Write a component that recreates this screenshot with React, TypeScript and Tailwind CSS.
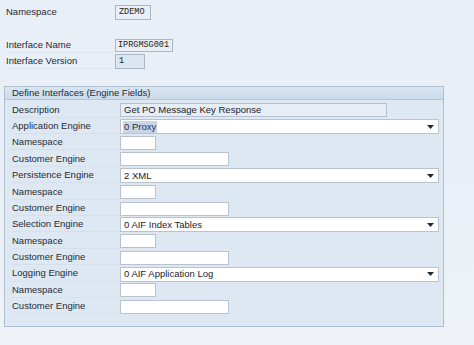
const font = { fontFamily: '"Liberation Sans", Arial, sans-serif' };
const mono = { fontFamily: '"Liberation Mono", "Courier New", monospace' };

type Row =
  | { label: string; kind: "display"; value: string }
  | { label: string; kind: "select"; value: string; selected?: boolean }
  | { label: string; kind: "short" }
  | { label: string; kind: "medium" };

const rows: Row[] = [
  { label: "Description", kind: "display", value: "Get PO Message Key Response" },
  { label: "Application Engine", kind: "select", value: "0 Proxy", selected: true },
  { label: "Namespace", kind: "short" },
  { label: "Customer Engine", kind: "medium" },
  { label: "Persistence Engine", kind: "select", value: "2 XML" },
  { label: "Namespace", kind: "short" },
  { label: "Customer Engine", kind: "medium" },
  { label: "Selection Engine", kind: "select", value: "0 AIF Index Tables" },
  { label: "Namespace", kind: "short" },
  { label: "Customer Engine", kind: "medium" },
  { label: "Logging Engine", kind: "select", value: "0 AIF Application Log" },
  { label: "Namespace", kind: "short" },
  { label: "Customer Engine", kind: "medium" },
];

function Arrow() {
  return (
    <svg width="7" height="4" viewBox="0 0 7 4" className="mr-[4px]">
      <path d="M0 0h7L3.5 4z" fill="#1f2a36" />
    </svg>
  );
}

function Field({ row }: { row: Row }) {
  if (row.kind === "display") {
    return (
      <div className="h-[14px] w-[267px] border border-[#b4c0cd] bg-[#e6edf4] pl-[3px] text-[9.5px] leading-[12px] text-[#1a242e]">
        {row.value}
      </div>
    );
  }
  if (row.kind === "select") {
    return (
      <div className="flex h-[15px] w-[319px] items-center justify-between border border-[#b8c3cf] bg-white pl-[2px] text-[9.5px] text-[#1a242e]">
        <span className={row.selected ? "bg-[#c9d5e6] px-[1px] leading-[12px] text-[#1b2e55]" : "px-[1px] leading-[12px]"}>
          {row.value}
        </span>
        <Arrow />
      </div>
    );
  }
  if (row.kind === "short") {
    return <div className="h-[14px] w-[36px] border border-[#b8c3cf] bg-white" />;
  }
  return <div className="h-[14px] w-[109px] border border-[#b8c3cf] bg-white" />;
}

export default function App() {
  return (
    <div
      className="flex h-[345px] w-[474px] flex-col bg-gradient-to-b from-[#e8eff6] via-[#e8eff6] to-[#eff3f7] text-[#1f2a35]"
      style={font}
    >
      {/* header fields */}
      <div className="flex flex-col pl-[6px] pt-[4px]">
        <div className="flex h-[16px] items-center">
          <div className="w-[109px] text-[9.5px]">Namespace</div>
          <div
            className="flex h-[15px] w-[36px] items-center border border-[#aab6c3] bg-[#e9eff5] pl-[3px] text-[8.5px] text-[#222]"
            style={mono}
          >
            ZDEMO
          </div>
        </div>
        <div className="mt-[18px] flex h-[15px] items-center">
          <div className="h-full w-[109px] border-b border-[#dde5ed] text-[9.5px] leading-[14px]">Interface Name</div>
          <div
            className="flex h-[13px] w-[58px] items-center border border-[#aab6c3] bg-[#e9eff5] pl-[2px] text-[8.5px] text-[#222]"
            style={mono}
          >
            IPRGMSG001
          </div>
        </div>
        <div className="mt-[1px] flex h-[15px] items-center">
          <div className="h-full w-[109px] border-b border-[#dde5ed] text-[9.5px] leading-[14px]">Interface Version</div>
          <div
            className="flex h-[15px] w-[30px] items-center border border-[#aab6c3] bg-[#dce6f0] pl-[3px] text-[8.5px] text-[#222]"
            style={mono}
          >
            1
          </div>
        </div>
      </div>

      {/* group box */}
      <div className="ml-[4px] mt-[17px] h-[241px] w-[440px] border border-[#aebfd1] bg-[#dde8f2]">
        <div className="h-[13px] border-b border-[#b3c4d6] bg-gradient-to-b from-[#d9e5f1] to-[#cbdbeb] pl-[7px] text-[9.5px] leading-[12px] text-[#1f2b38]">
          Define Interfaces (Engine Fields)
        </div>
        <div className="flex flex-col pl-[7px] pt-[2px]">
          {rows.map((row, i) => (
            <div key={i} className="flex h-[16.4px] items-center">
              <div className="flex h-[15px] w-[108px] items-center border-b border-[#d6e0ea] text-[9.5px] text-[#1f2a35]">
                {row.label}
              </div>
              <Field row={row} />
            </div>
          ))}
        </div>
      </div>
    </div>
  );
}
